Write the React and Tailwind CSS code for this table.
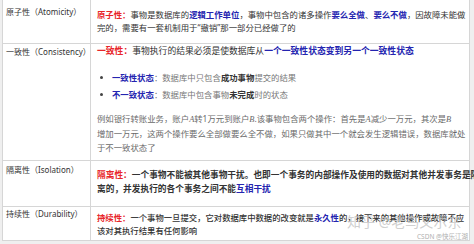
const FONT = { fontFamily: '"Noto Sans", "Noto Sans CJK SC", sans-serif' };

function Red({ children }) {
  return <span className="font-bold text-[#e8262a]">{children}</span>;
}

function Blue({ children }) {
  return <span className="font-bold text-[#2424b0]">{children}</span>;
}

function M({ children }) {
  return <span className="italic" style={{ fontFamily: '"Liberation Serif", serif' }}>{children}</span>;
}

export default function App() {
  return (
    <div
      className="relative w-[474px] h-[244px] overflow-hidden bg-[#efefef] text-[#333]"
      style={FONT}
    >
      <div className="ml-[2px] w-[468px] bg-white border-l border-r border-b border-[#d6d6d6]">
        {/* Atomicity */}
        <div className="grid grid-cols-[88px_1fr] h-[44px] border-b border-[#d6d6d6]">
          <div className="border-r border-[#d6d6d6] pl-[3px] pt-[5px] text-[8px] leading-[13px] whitespace-nowrap">
            原子性（Atomicity）
          </div>
          <div className="pl-[6px] pt-[8px] text-[8.4px] leading-[13px] whitespace-nowrap">
            <Red>原子性：</Red>事物是数据库的<Blue>逻辑工作单位</Blue>，事物中包含的诸多操作
            <Blue>要么全做</Blue>、<Blue>要么不做</Blue>，因故障未能做
            <br />
            完的，需要有一套机制用于“撤销”那一部分已经做了的
          </div>
        </div>

        {/* Consistency */}
        <div className="grid grid-cols-[88px_1fr] h-[117px] border-b border-[#d6d6d6]">
          <div className="border-r border-[#d6d6d6] pl-[3px] pt-[1px] text-[8px] leading-[13px] whitespace-nowrap">
            一致性（Consistency）
          </div>
          <div className="pl-[6px] pt-[1px] whitespace-nowrap">
            <div className="text-[8.8px] leading-[13px]">
              <Red>一致性：</Red>事物执行的结果必须是使数据库从<Blue>一个一致性状态变到另一个一致性状态</Blue>
            </div>
            <ul className="mt-[11px] text-[8.4px] leading-[17px] text-[#777]">
              <li className="flex items-center">
                <span className="mx-[3px] mr-[9px] w-[3px] h-[3px] rounded-full bg-[#444]" />
                <Blue>一致性状态</Blue>：数据库中只包含<span className="font-bold text-[#333]">成功事物</span>提交的结果
              </li>
              <li className="flex items-center">
                <span className="mx-[3px] mr-[9px] w-[3px] h-[3px] rounded-full bg-[#444]" />
                <Blue>不一致状态</Blue>：数据库中包含事物<span className="font-bold text-[#333]">未完成</span>时的状态
              </li>
            </ul>
            <p className="mt-[9px] text-[8.4px] leading-[14px] text-[#6a6a6a]">
              例如银行转账业务，账户<M>A</M>转1万元到账户<M>B</M>.该事物包含两个操作：首先是<M>A</M>减少一万元，其次是<M>B</M>
              <br />
              增加一万元，这两个操作要么全部做要么全不做，如果只做其中一个就会发生逻辑错误，数据库就处
              <br />
              于不一致状态了
            </p>
          </div>
        </div>

        {/* Isolation */}
        <div className="grid grid-cols-[88px_1fr] h-[46px] border-b border-[#d6d6d6]">
          <div className="border-r border-[#d6d6d6] pl-[3px] pt-[2px] text-[8px] leading-[13px] whitespace-nowrap">
            隔离性（Isolation）
          </div>
          <div className="pl-[6px] pt-[7px] text-[8.7px] leading-[14px] font-semibold whitespace-nowrap">
            <Red>隔离性：</Red>一个事物不能被其他事物干扰。也即一个事务的内部操作及使用的数据对其他并发事务是隔
            <br />
            离的，并发执行的各个事务之间不能<Blue>互相干扰</Blue>
          </div>
        </div>

        {/* Durability */}
        <div className="grid grid-cols-[88px_1fr] h-[33px]">
          <div className="border-r border-[#d6d6d6] pl-[3px] pt-0 text-[8px] leading-[13px] whitespace-nowrap">
            持续性（Durability）
          </div>
          <div className="pl-[6px] pt-[4px] text-[8.35px] leading-[13px] font-medium whitespace-nowrap">
            <Red>持续性：</Red>一个事物一旦提交，它对数据库中数据的改变就是<Blue>永久性</Blue>的，接下来的其他操作或故障不应
            <br />
            该对其执行结果有任何影响
          </div>
        </div>
      </div>

      {/* watermarks */}
      <div className="absolute left-[347px] top-[214px] text-[14px] leading-[16px] text-[#c4c4c4]/80 whitespace-nowrap">
        知乎 @老鸟又尔东
      </div>
      <div className="absolute left-[417px] top-[233px] text-[6.5px] leading-[8px] text-[#b0b0b0] whitespace-nowrap">
        CSDN @快乐江湖
      </div>
    </div>
  );
}
